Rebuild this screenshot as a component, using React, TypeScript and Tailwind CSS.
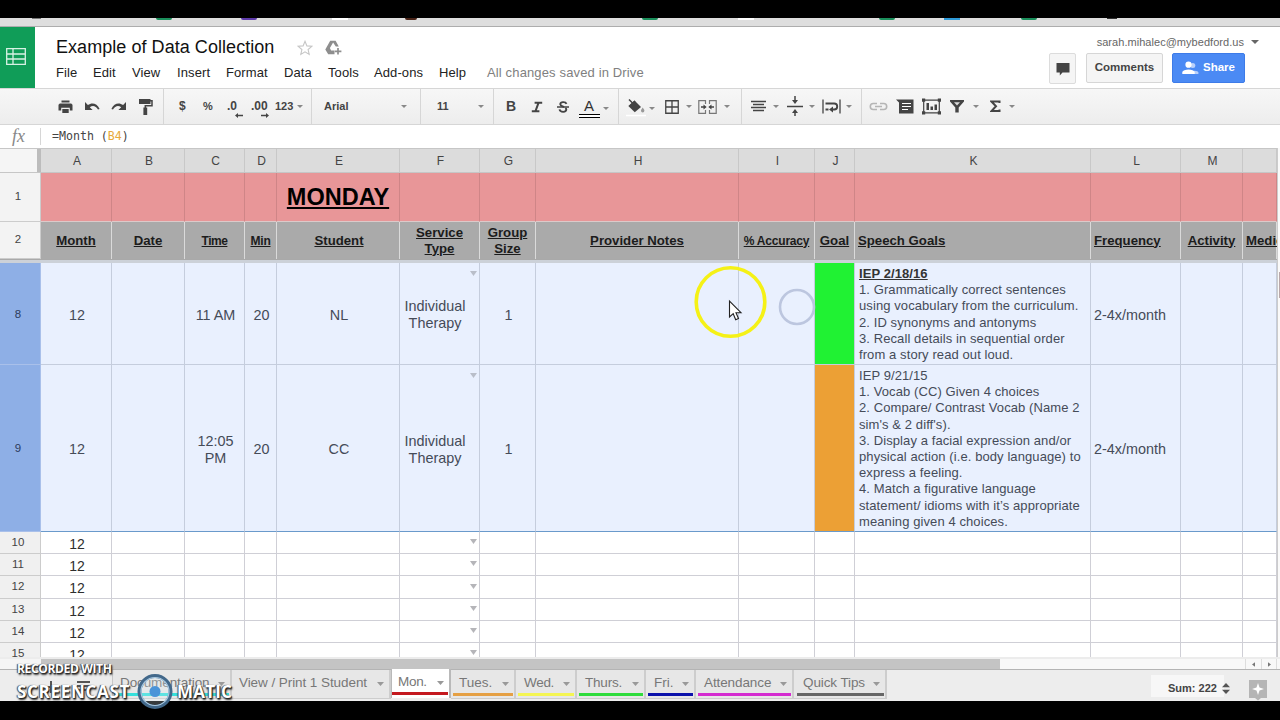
import React from "react";

const columns = [
  { id: "A", width: "w-[71px]" },
  { id: "B", width: "w-[73px]" },
  { id: "C", width: "w-[60px]" },
  { id: "D", width: "w-[32px]" },
  { id: "E", width: "w-[123px]" },
  { id: "F", width: "w-[80px]" },
  { id: "G", width: "w-[56px]" },
  { id: "H", width: "w-[203px]" },
  { id: "I", width: "w-[76px]" },
  { id: "J", width: "w-[40px]" },
  { id: "K", width: "w-[236px]" },
  { id: "L", width: "w-[90px]" },
  { id: "M", width: "w-[62px]" },
  { id: "N", width: "w-[34px]" },
];

const headings: Record<string, string> = {
  A: "Month",
  B: "Date",
  C: "Time",
  D: "Min",
  E: "Student",
  F: "Service Type",
  G: "Group Size",
  H: "Provider Notes",
  I: "% Accuracy",
  J: "Goal",
  K: "Speech Goals",
  L: "Frequency",
  M: "Activity",
  N: "Medic",
};

const students = [
  {
    row: 8,
    height: "h-[102px]",
    goalColor: "bg-[#20f233]",
    cells: { A: "12", C: "11 AM", D: "20", E: "NL", F: "Individual Therapy", G: "1", L: "2-4x/month" } as Record<string, string>,
    title: "IEP 2/18/16",
    bold: true,
    goals: [
      "1. Grammatically correct sentences",
      "using vocabulary from the curriculum.",
      "2. ID synonyms and antonyms",
      "3. Recall details in sequential order",
      "from a story read out loud.",
    ],
  },
  {
    row: 9,
    height: "h-[167px]",
    goalColor: "bg-[#eca035]",
    cells: { A: "12", C: "12:05 PM", D: "20", E: "CC", F: "Individual Therapy", G: "1", L: "2-4x/month" } as Record<string, string>,
    title: "IEP 9/21/15",
    bold: false,
    goals: [
      "1. Vocab (CC) Given 4 choices",
      "2. Compare/ Contrast Vocab (Name 2",
      "sim's & 2 diff's).",
      "3. Display a facial expression and/or",
      "physical action (i.e. body language) to",
      "express a feeling.",
      "4. Match a figurative language",
      "statement/ idioms with it’s appropriate",
      "meaning given 4 choices.",
    ],
  },
];

const emptyRows = [
  { row: 10, height: "h-[22px]" },
  { row: 11, height: "h-[22px]" },
  { row: 12, height: "h-[23px]" },
  { row: 13, height: "h-[22px]" },
  { row: 14, height: "h-[22px]" },
  { row: 15, height: "h-[22px]" },
];

const sheets = [
  { name: "Documentation", box: "w-[119px] pl-[7px]", bar: "bg-[#35e0dc]", text: "tracking-[-0.1px]" },
  { name: "View / Print 1 Student", box: "w-[159px] pl-[7px]", bar: "", text: "tracking-[-0.07px]" },
  { name: "Mon.", box: "w-[60px] pl-[6px]", bar: "bg-[#c4191f]", text: "tracking-[-0.3px]" },
  { name: "Tues.", box: "w-[65px] pl-[8px]", bar: "bg-[#e5a044]", text: "" },
  { name: "Wed.", box: "w-[61px] pl-[8px]", bar: "bg-[#f4f552]", text: "tracking-[-0.3px]" },
  { name: "Thurs.", box: "w-[69px] pl-[8px]", bar: "bg-[#2fdc3c]", text: "tracking-[-0.2px]" },
  { name: "Fri.", box: "w-[50px] pl-[8px]", bar: "bg-[#0b11ab]", text: "" },
  { name: "Attendance", box: "w-[98px] pl-[8px]", bar: "bg-[#d42bd0]", text: "tracking-[-0.1px]" },
  { name: "Quick Tips", box: "w-[93px] pl-[9px]", bar: "bg-[#666]", text: "tracking-[-0.1px]" },
];

const menus = [
  { name: "File", width: "w-[37px]" },
  { name: "Edit", width: "w-[39px]" },
  { name: "View", width: "w-[45px]" },
  { name: "Insert", width: "w-[49px]" },
  { name: "Format", width: "w-[58px]" },
  { name: "Data", width: "w-[44px]" },
  { name: "Tools", width: "w-[46px]" },
  { name: "Add-ons", width: "w-[65px]" },
  { name: "Help", width: "w-[48px]" },
];

const Caret = ({ className = "" }: { className?: string }) => (
  <svg className={`shrink-0 ${className}`} width="6" height="3" viewBox="0 0 6 3">
    <path d="M0 0h6L3 3z" fill="currentColor" />
  </svg>
);

const Sep = ({ className = "" }: { className?: string }) => (
  <div className={`h-full w-px shrink-0 bg-[#d6d6d6] ${className}`} />
);

const Icon = ({ w, h = 18, className = "", children }: { w: number; h?: number; className?: string; children: React.ReactNode }) => (
  <svg
    className={`shrink-0 ${className}`}
    width={w}
    height={h}
    viewBox={`0 0 ${w} ${h}`}
    fill="none"
    stroke="#444"
    strokeWidth="1.5"
  >
    {children}
  </svg>
);

const BrowserStrip = () => (
  <div className="flex h-[9px] shrink-0 items-start border-b border-[#adadad] bg-[#dedede]">
    <div className="ml-8 h-px w-[9px] bg-[#777]" />
    <div className="ml-[115px] h-[2px] w-4 rounded-b bg-[#1b8f5c]" />
    <div className="ml-[69px] h-[2px] w-4 rounded-b bg-[#5f3cab]" />
    <div className="ml-[75px] h-[2px] w-4 bg-white" />
    <div className="ml-[57px] h-[2px] w-3 rounded-b bg-[#4a2418]" />
    <div className="ml-[225px] h-[2px] w-4 rounded-b bg-[#1b8f5c]" />
    <div className="ml-[80px] h-[2px] w-4 bg-white" />
    <div className="ml-[125px] h-[2px] w-4 rounded-b bg-[#1b8f5c]" />
    <div className="ml-[49px] h-[2px] w-4 bg-[#2f9bd9]" />
    <div className="ml-[61px] h-[2px] w-4 rounded-b bg-[#1b8f5c]" />
    <div className="ml-[70px] h-px w-[10px] bg-[#333]" />
  </div>
);

const Header = () => (
  <div className="flex h-[61px] shrink-0 bg-white">
    <div className="flex w-[35px] items-center justify-center bg-[#109d58] pb-[3px] pr-[4px]">
      <svg width="20" height="17" viewBox="0 0 20 17" fill="none" stroke="#d8f2e4" strokeWidth="1.3">
        <path d="M.7.7h18.6v15.6H.7zM.7 6h18.6M.7 11h18.6M7 .7v15.6" />
      </svg>
    </div>
    <div className="flex flex-col pl-[21px]">
      <div className="flex h-[36px] items-center pt-[5px]">
        <span className="w-[241px] whitespace-nowrap text-[18px] tracking-[0.05px] text-[#111]">Example of Data Collection</span>
        <svg width="16" height="16" viewBox="0 0 16 16" fill="none" stroke="#c6c6c6" strokeWidth="1.1">
          <path d="M8 1.3l1.900 4.600 4.900.4-3.700 3.200 1.100 4.900L8 11.800l-4.200 2.600 1.100-4.900L1.200 6.300l4.900-.4z" />
        </svg>
        <svg className="ml-[12px]" width="17" height="16" viewBox="0 0 17 16">
          <path d="M5.200.8h5.400l3.200 5.800h-3l-2.700-4.200-3.200 5.700 1.200 2.300h3.400v3.900H3.200L.3 9.600z" fill="#8e8e8e" />
          <path d="M13 8v6.600M9.800 11.300h6.600" stroke="#8e8e8e" strokeWidth="1.7" />
        </svg>
      </div>
      <div className="flex pt-px text-[13px] leading-[18px] tracking-[0.1px] text-[#222]">
        {menus.map((m) => (
          <span key={m.name} className={`${m.width} whitespace-nowrap`}>{m.name}</span>
        ))}
        <span className="whitespace-nowrap tracking-[0.14px] text-[#808080]">All changes saved in Drive</span>
      </div>
    </div>
    <div className="ml-auto flex flex-col items-end">
      <div className="flex h-[26px] items-center pr-[21px] pt-[4px]">
        <span className="text-[11px] tracking-[0.04px] text-[#666]">sarah.mihalec@mybedford.us</span>
        <svg className="ml-[7px]" width="8" height="4" viewBox="0 0 8 4">
          <path d="M0 0h8L4 4z" fill="#666" />
        </svg>
      </div>
      <div className="flex pr-[35px]">
        <div className="flex h-[31px] w-[27px] items-center justify-center rounded-[2px] border border-[#dcdcdc] bg-[#f5f5f5]">
          <svg width="14" height="14" viewBox="0 0 14 14">
            <path d="M.5 1h13v9.500H6.500L3.800 13.400v-2.900H.5z" fill="#444" />
          </svg>
        </div>
        <div className="ml-[10px] flex h-[30px] w-[77px] items-center justify-center rounded-[2px] border border-[#d6d6d6] bg-[#f5f5f5] text-[11.5px] font-bold text-[#444]">
          Comments
        </div>
        <div className="ml-[9px] flex h-[30px] w-[73px] items-center rounded-[2px] border border-[#3d7be8] bg-[#4b8af4] pl-[9px] text-[11.5px] font-bold text-white">
          <svg className="mr-[4px]" width="17" height="14" viewBox="0 0 17 14">
            <circle cx="10.800" cy="4.600" r="2.500" fill="#b8d0fb" />
            <path d="M9 13V10.600c4-1.600 7-.4 7.400 1V13z" fill="#b8d0fb" />
            <circle cx="6.500" cy="3.700" r="3.100" fill="#fff" />
            <path d="M.3 13v-2c.8-3.400 11.600-3.400 12.400 0v2z" fill="#fff" />
          </svg>
          Share
        </div>
      </div>
    </div>
  </div>
);

const Toolbar = () => (
  <div className="flex h-[37px] shrink-0 items-center border-y border-[#d6d6d6] bg-linear-to-b from-[#f7f7f7] to-[#ededed] text-[12px] font-bold text-[#444]">
    <Icon w={15} className="ml-[58px]">
      <path d="M3.500 2.500h8v2h-8zM1.800 5.500h11.400l1.300 1.300v5.700h-2.700V9.700H3.200v2.800H.5V6.800zM4.300 11h6.400v4H4.300z" fill="#444" stroke="none" />
    </Icon>
    <Icon w={16} className="ml-[11px]">
      <path d="M1 4v8h7.600L5.800 9.200C8.800 7 12 8 14 11.600l1.600-.7C13 5.200 8 4 3.900 7z" fill="#444" stroke="none" />
    </Icon>
    <Icon w={16} className="ml-[11px]">
      <path d="M15 4v8H7.400l2.800-2.800C7.200 7 4 8 2 11.600l-1.600-.7C3 5.200 8 4 12.100 7z" fill="#444" stroke="none" />
    </Icon>
    <Icon w={15} className="ml-[11px]">
      <path d="M1 1h11.500v5H1z" fill="#444" stroke="none" />
      <path d="M12 2.700h2v5H7.300V10" />
      <path d="M5.400 9.500h3.800v7.500H5.400z" fill="#444" stroke="none" />
    </Icon>
    <Sep className="ml-[10px]" />
    <span className="ml-[15px] w-[10px] pb-px">$</span>
    <span className="ml-[14px] w-[12px] text-[11px]">%</span>
    <div className="ml-[12px] w-[17px] shrink-0">
      <span className="block h-[13px] leading-[13px]">.0</span>
      <svg className="-mb-[5px] ml-[8px]" width="8" height="5" viewBox="0 0 8 5">
        <path d="M0 2.500L3 0v1.800h5v1.400H3V5z" fill="#444" />
      </svg>
    </div>
    <div className="ml-[7px] w-[19px] shrink-0">
      <span className="block h-[13px] leading-[13px]">.00</span>
      <svg className="-mb-[5px] ml-[10px]" width="8" height="5" viewBox="0 0 8 5">
        <path d="M8 2.500L5 0v1.800H0v1.400h5V5z" fill="#444" />
      </svg>
    </div>
    <span className="ml-[5px] w-[19px] text-[11px]">123</span>
    <Caret className="ml-[3px] text-[#888]" />
    <Sep className="ml-[8px]" />
    <span className="ml-[12px] w-[26px] text-[11px]">Arial</span>
    <Caret className="ml-[51px] text-[#888]" />
    <Sep className="ml-[13px]" />
    <span className="ml-[16px] w-[12px] text-[11px]">11</span>
    <Caret className="ml-[29px] text-[#888]" />
    <Sep className="ml-[9px]" />
    <span className="ml-[12px] w-[11px] text-[14px]">B</span>
    <Icon w={12} className="ml-[14px]">
      <path d="M3.600 4.700h7.600M.8 13.300h7.600M7.600 4.700l-3.200 8.600" strokeWidth="2" />
    </Icon>
    <Icon w={12} className="ml-[14px]">
      <path d="M9.500 5.800C8.500 3.400 3 3.600 3.300 6.400c.2 1.600 2.200 2 3.700 2.600M2.500 11.400c.8 3.400 6.800 3 6.800.2 0-.8-.4-1.300-.9-1.700" strokeWidth="1.900" />
      <path d="M0 9h12" />
    </Icon>
    <div className="ml-[9px] flex w-[22px] shrink-0 flex-col items-center pt-[2px]">
      <span className="text-[15px] font-normal leading-[15px] text-[#333]">A</span>
      <div className="mt-[1px] h-[4px] w-[21px] border-y border-black bg-white" />
    </div>
    <Caret className="ml-[3px] mt-[3px] text-[#888]" />
    <Sep className="ml-[9px]" />
    <Icon w={20} h={20} className="ml-[7px]">
      <path d="M8.500 3.500l6.500 6.500-6.200 5.200L2.300 9z" fill="#444" stroke="none" />
      <path d="M3 2.500l6 6M4 9l5-5" />
      <path d="M16.700 10.500c1.300 1.800 1.700 2.400 1.700 3.200a1.700 1.700 0 0 1-3.400 0c0-.8.4-1.400 1.700-3.200z" fill="#999" stroke="none" />
      <path d="M0 18.500h20" stroke="#fff" />
    </Icon>
    <Caret className="ml-[3px] mt-[3px] text-[#888]" />
    <Icon w={14} className="ml-[10px]">
      <path d="M.75 2.750h12.500v12.500H.75zM7 2.700v12.600M.7 9h12.600" strokeWidth="1.300" />
    </Icon>
    <Caret className="ml-[7px] text-[#888]" />
    <Icon w={19} className="ml-[6px]">
      <path d="M7.500 6V2.700H.8v12.600h6.700V12M11.500 6V2.700h6.700v12.600h-6.700V12" stroke="#777" strokeWidth="1.200" />
      <path d="M3 9h4M16 9h-4" />
      <path d="M5.500 6.500L8.700 9l-3.200 2.500zM13.500 6.500L10.300 9l3.200 2.500z" fill="#444" stroke="none" />
    </Icon>
    <Caret className="ml-[7px] text-[#888]" />
    <Sep className="ml-[11px]" />
    <Icon w={15} className="ml-[9px]">
      <path d="M0 3.500h15M2 6.500h11M0 9.500h15M2 12.500h11" strokeWidth="1.300" />
    </Icon>
    <Caret className="ml-[7px] text-[#888]" />
    <Icon w={16} h={22} className="ml-[8px]">
      <path d="M0 10.500h16M8 0v4M8 20v-4" />
      <path d="M5 4h6L8 8zM5 17h6l-3-4z" fill="#444" stroke="none" />
    </Icon>
    <Caret className="ml-[6px] text-[#888]" />
    <Icon w={19} className="ml-[7px]">
      <path d="M1 1.500v14M18 1.500v14" strokeWidth="1.300" />
      <path d="M3.500 5.500h8.700a3 3 0 0 1 0 6H10M3.500 11.500h3" strokeWidth="1.900" />
      <path d="M11 8.500v6l-4-3z" fill="#444" stroke="none" />
    </Icon>
    <Caret className="ml-[5px] text-[#888]" />
    <Sep className="ml-[9px]" />
    <Icon w={19} className="ml-[7px]">
      <path d="M8 5.500H4.300a3 3 0 0 0 0 6H8M11 5.500h3.700a3 3 0 0 1 0 6H11M6 8.500h7" stroke="#b5b5b5" strokeWidth="1.600" />
    </Icon>
    <Icon w={18} className="ml-[8px]">
      <path d="M0 1.500h17.500v14H3V4.500z" fill="#444" stroke="none" />
      <path d="M6 5.500h9M6 8.500h9M6 11.500h6" stroke="#fff" strokeWidth="1.200" />
    </Icon>
    <Icon w={19} className="ml-[8px]">
      <path d="M1.700 2.200h15.600v12.600H1.700z" strokeWidth="1.200" />
      <path d="M0 .5h3.200v3.200H0zM15.800.5H19v3.200h-3.200zM0 13.300h3.200v3.200H0zM15.800 13.300H19v3.200h-3.200zM4.500 5H7v7H4.500zM8.500 8.500H11V12H8.500zM12.500 6.500H15V12h-2.500z" fill="#444" stroke="none" />
    </Icon>
    <Icon w={14} className="ml-[9px]">
      <path d="M0 2h14v1.500L8.700 9.500v5H5.300v-5L0 3.500z" fill="#444" stroke="none" />
      <path d="M4 4.200h6L7 7.500z" fill="#ddd" stroke="none" />
    </Icon>
    <Caret className="ml-[9px] text-[#888]" />
    <Icon w={11} className="ml-[11px]">
      <path d="M9.500 5V3.500H1.500L6 8.200 1.500 13h8v-1.500" strokeWidth="2" />
    </Icon>
    <Caret className="ml-[8px] text-[#888]" />
  </div>
);

const FormulaBar = () => (
  <div className="flex h-[23px] shrink-0 items-center bg-white">
    <span className="w-[40px] pl-[12px] font-['Liberation_Serif',serif] text-[18px] italic text-[#888]">fx</span>
    <div className="h-[17px] w-px bg-[#d6d6d6]" />
    <span className="whitespace-pre pl-[11px] font-['DejaVu_Sans_Mono',monospace] text-[11.600px] text-[#444]">
      =Month (<span className="text-[#e8a93a]">B4</span>)
    </span>
  </div>
);

const RowNumber = ({ n, className }: { n: number; className: string }) => (
  <div className={`flex w-[41px] shrink-0 items-center justify-center border-b border-r pr-[4px] text-[11.5px] ${className}`}>{n}</div>
);

const headingStyle = (id: string) => {
  if (id === "C") return "justify-center text-[12px] tracking-[-0.5px]";
  if (id === "D") return "justify-center text-[12px] tracking-[-0.2px]";
  if (id === "I") return "justify-center whitespace-nowrap text-[12px] tracking-[-0.2px]";
  if (id === "K" || id === "L" || id === "N") return "pl-[3px] text-[13.2px]";
  if (id === "E") return "justify-center pl-[2px] text-[13.2px]";
  return "justify-center text-center text-[13.2px]";
};

const Grid = () => (
  <div className="flex h-[509px] shrink-0 bg-white">
    <div className="flex w-[1277px] flex-col overflow-hidden">
      <div className="flex h-[25px] shrink-0 border-b border-t border-[#c6c6c6]">
        <div className="w-[41px] border-r-4 border-[#bcbcbc] bg-[#f5f5f5]" />
        {columns.map((c) => (
          <div
            key={c.id}
            className={`${c.width} flex shrink-0 items-center justify-center border-r border-[#c8c8c8] bg-[#dcdcdc] pl-[2px] text-[12px] text-[#444]`}
          >
            {c.id === "N" ? "" : c.id}
          </div>
        ))}
      </div>

      <div className="flex h-[49px] shrink-0">
        <RowNumber n={1} className="border-[#ccc] bg-[#f3f3f3] text-[#444]" />
        {columns.map((c) => (
          <div key={c.id} className={`${c.width} flex shrink-0 items-center justify-center border-b border-r border-b-[#dccaca] border-r-[#cf8587] bg-[#e89698]`}>
            {c.id === "E" && (
              <span className="pt-px text-[23.5px] font-bold text-black underline decoration-2 underline-offset-2">MONDAY</span>
            )}
          </div>
        ))}
      </div>

      <div className="flex h-[37px] shrink-0">
        <RowNumber n={2} className="border-[#ccc] bg-[#f3f3f3] text-[#444]" />
        {columns.map((c) => (
          <div
            key={c.id}
            className={`${c.width} flex shrink-0 items-center border-r border-[#dadada] bg-[#aaa] font-bold leading-[16px] text-[#1c1c1c] underline ${headingStyle(c.id)}`}
          >
            {headings[c.id]}
          </div>
        ))}
      </div>
      <div className="h-[4px] shrink-0 border-t border-[#a9a9a9] bg-[#ccd1d8]" />

      {students.map((s) => (
        <div key={s.row} className={`flex shrink-0 ${s.height}`}>
          <RowNumber n={s.row} className="border-[#a9c0ea] bg-[#8eafe6] pt-[2px] text-[#2c3c5c]" />
          {columns.map((c) => {
            const line = s.row === 9 ? "border-b-[#6a9acb]" : "border-b-[#c5cddd]";
            if (c.id === "J") return <div key={c.id} className={`${c.width} shrink-0 border-b border-r border-r-[#c5cddd] ${line} ${s.goalColor}`} />;
            if (c.id === "K")
              return (
                <div key={c.id} className={`${c.width} flex shrink-0 flex-col justify-center whitespace-nowrap border-b border-r border-r-[#c5cddd] bg-[#e9f0fe] pl-[4px] pt-[2px] text-[13px] leading-[16.2px] tracking-[0.09px] text-[#454b58] ${line}`}>
                  <span className={s.bold ? "font-bold text-[#333] underline" : ""}>{s.title}</span>
                  {s.goals.map((g) => (
                    <span key={g}>{g}</span>
                  ))}
                </div>
              );
            return (
              <div
                key={c.id}
                className={`${c.width} relative flex shrink-0 items-center border-b border-r border-r-[#c5cddd] bg-[#e9f0fe] pt-[3px] text-[14.4px] leading-[17px] text-[#454b58] ${line} ${
                  c.id === "L" ? "pl-[3px]" : c.id === "F" ? "justify-center pr-[9px] text-center" : "justify-center pl-[6px] pr-1 text-center"
                }`}
              >
                {s.cells[c.id] || ""}
                {c.id === "F" && (
                  <svg className="absolute right-[2px] top-[8px]" width="7" height="5" viewBox="0 0 7 5">
                    <path d="M0 0h7L3.500 5z" fill="#b9bec9" />
                  </svg>
                )}
              </div>
            );
          })}
        </div>
      ))}

      {emptyRows.map((r) => (
        <div key={r.row} className={`flex shrink-0 ${r.height}`}>
          <RowNumber n={r.row} className="border-[#ccc] bg-[#f0f0f0] text-[#444]" />
          {columns.map((c) => (
            <div key={c.id} className={`${c.width} flex shrink-0 items-center justify-center border-b border-r border-[#cfcfd6] bg-white text-[14px] leading-none text-[#2e2e2e]`}>
              {c.id === "A" && <span className="pl-[2px] pt-[2px]">12</span>}
              {c.id === "F" && (
                <svg className="mb-[2px] ml-auto mr-[2px]" width="7" height="5" viewBox="0 0 7 5">
                  <path d="M0 0h7L3.500 5z" fill="#b5b5b9" />
                </svg>
              )}
            </div>
          ))}
        </div>
      ))}
    </div>
    <div className="flex w-[3px] items-start justify-end border-l border-[#ccc] bg-[#fafafa] pt-[124px]">
      <div className="h-[26px] w-px bg-[#b9a9ab]" />
    </div>
  </div>
);

const ScrollBar = () => (
  <div className="flex h-[13px] shrink-0 border-b border-t-2 border-b-[#b4b4b4] border-t-[#ececec] bg-[#f8f8f8]">
    <div className="w-[41px] bg-[#f5f5f5]" />
    <div className="w-[959px] bg-[#c4c4c4]" />
    <div className="ml-auto mr-[3px] flex">
      <div className="flex w-[16px] items-center justify-center border-l border-[#ddd]">
        <svg width="3" height="5" viewBox="0 0 4 6"><path d="M4 0v6L0 3z" fill="#777" /></svg>
      </div>
      <div className="flex w-[16px] items-center justify-center border-x border-[#ddd]">
        <svg width="3" height="5" viewBox="0 0 4 6"><path d="M0 0v6l4-3z" fill="#777" /></svg>
      </div>
    </div>
  </div>
);

const SheetTabs = () => (
  <div className="flex h-[31px] shrink-0 bg-[#ededed]">
    <div className="flex w-[113px] items-center border-r border-[#c8c8c8] pl-[45px] pt-[2px]">
      <svg width="12" height="12" viewBox="0 0 12 12" stroke="#555" strokeWidth="2"><path d="M6 0v12M0 6h12" /></svg>
      <svg className="ml-[20px]" width="13" height="12" viewBox="0 0 13 12" stroke="#555" strokeWidth="2"><path d="M0 1h13M0 5h13M0 9h13" /></svg>
    </div>
    {sheets.map((s) => {
      const active = s.name === "Mon.";
      return (
        <div
          key={s.name}
          className={`${s.box} flex shrink-0 flex-col border-r-2 pr-[5px] ${
            active ? "-mt-px h-[29px] border-l border-[#b9b9b9] bg-white" : "h-[29px] border-b border-[#cdcdcd] bg-[#e7e7e7]"
          }`}
        >
          <div className="flex h-[23px] shrink-0 items-center justify-between whitespace-nowrap pt-[4px] text-[13.500px] text-[#777]">
            <span className={s.text}>{s.name}</span>
            <svg width="7" height="4" viewBox="0 0 7 4"><path d="M0 0h7L3.500 4z" fill="#999" /></svg>
          </div>
          <div className={`-ml-[6px] -mr-[4px] h-[3px] shrink-0 ${s.bar}`} />
        </div>
      );
    })}
    <div className="ml-auto mt-[5px] flex h-[22px] w-[73px] shrink-0 items-center bg-[#f7f7f7] pl-[17px] pt-[5px] text-[11px] font-bold text-[#444]">
      <span className="w-[54px] shrink-0 whitespace-nowrap">Sum: 222</span>
      <svg className="shrink-0" width="8" height="11" viewBox="0 0 8 11"><path d="M0 4.200L4 0l4 4.200zM0 6.800h8L4 11z" fill="#555" /></svg>
    </div>
    <svg className="ml-[25px] mr-[13px] mt-[10px] shrink-0" width="18" height="21" viewBox="0 0 18 21">
      <path d="M0 0h18v18h-6l-3 2.500L6 18H0z" fill="#b5b5b5" />
      <path d="M9 3l1.500 4.500L15 9l-4.500 1.500L9 15l-1.500-4.500L3 9l4.500-1.500z" fill="#fff" />
    </svg>
  </div>
);

// screen recorder watermark, drawn over the bottom left corner
const Watermark = () => (
  <div className="absolute left-[17px] top-[660px] font-['Open_Sans',sans-serif] font-bold text-white [text-shadow:1px_1px_1px_#222,-1px_0_1px_#444,1px_2px_2px_#333]">
    <div className="whitespace-nowrap text-[12px] leading-[18px] tracking-[-0.35px]">RECORDED WITH</div>
    <div className="-mt-[4px] flex h-[36px] items-center">
      <span className="w-[120px] whitespace-nowrap text-[17px] tracking-[0.7px]">SCREENCAST</span>
      <svg width="36" height="36" viewBox="0 0 36 36" fill="none">
        <circle cx="18" cy="17.500" r="15.500" fill="#dceaf5" fillOpacity=".25" stroke="#42688a" strokeWidth="4" />
        <circle cx="18" cy="17.500" r="14" stroke="#a9c9e2" strokeWidth="1.200" />
        <circle cx="18" cy="17.500" r="5.500" fill="#4a94d8" />
      </svg>
      <span className="ml-[4px] whitespace-nowrap text-[17px] tracking-[0.2px]">MATIC</span>
    </div>
  </div>
);

const Pointer = () => (
  <div className="absolute left-[690px] top-[262px]">
    <svg width="130" height="80" viewBox="0 0 130 80" fill="none">
      <circle cx="107" cy="45" r="17" stroke="#bcc6df" strokeWidth="2.600" />
      <circle cx="40.500" cy="40" r="34.300" stroke="#f5f116" strokeWidth="3.600" />
      <path d="M39.500 39v16l3.700-3.300 2.500 6 2.800-1.200-2.500-5.800h5z" fill="#fff" stroke="#222" strokeWidth="1.100" />
    </svg>
  </div>
);

const App = () => {
  return (
    <div className="relative flex h-[720px] w-[1280px] flex-col overflow-hidden bg-black pt-[18px] font-['Liberation_Sans',Arial,sans-serif]">
      <BrowserStrip />
      <Header />
      <Toolbar />
      <FormulaBar />
      <Grid />
      <ScrollBar />
      <SheetTabs />
      <Watermark />
      <Pointer />
    </div>
  );
};

export default App;
